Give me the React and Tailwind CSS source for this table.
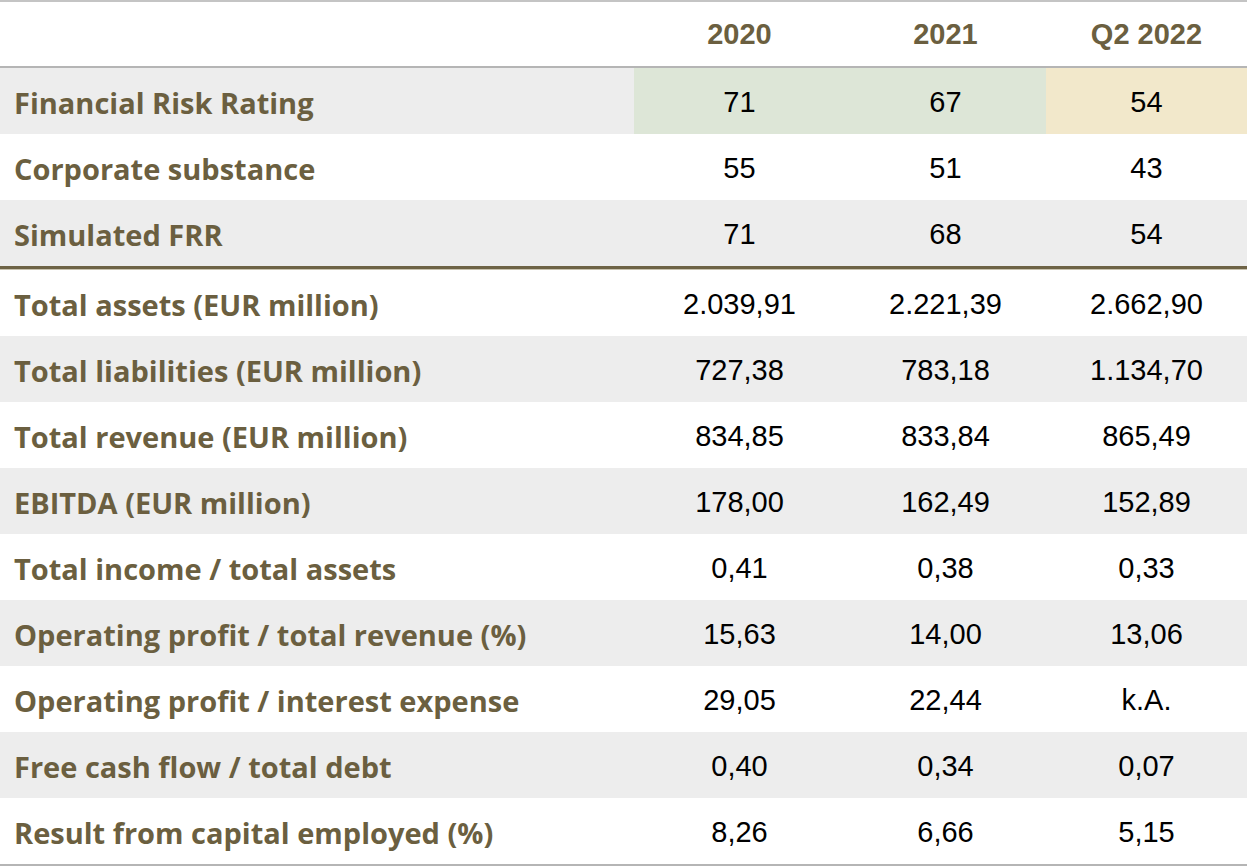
import React from "react";

const rows = [
  { label: "Financial Risk Rating", v: ["71", "67", "54"], gray: true, colors: ["bg-[#dde6d7]", "bg-[#dde6d7]", "bg-[#f2e8cb]"] },
  { label: "Corporate substance", v: ["55", "51", "43"] },
  { label: "Simulated FRR", v: ["71", "68", "54"], gray: true },
];
const rows2 = [
  { label: "Total assets (EUR million)", v: ["2.039,91", "2.221,39", "2.662,90"] },
  { label: "Total liabilities (EUR million)", v: ["727,38", "783,18", "1.134,70"], gray: true },
  { label: "Total revenue (EUR million)", v: ["834,85", "833,84", "865,49"] },
  { label: "EBITDA (EUR million)", v: ["178,00", "162,49", "152,89"], gray: true },
  { label: "Total income / total assets", v: ["0,41", "0,38", "0,33"] },
  { label: "Operating profit / total revenue (%)", v: ["15,63", "14,00", "13,06"], gray: true },
  { label: "Operating profit / interest expense", v: ["29,05", "22,44", "k.A."] },
  { label: "Free cash flow / total debt", v: ["0,40", "0,34", "0,07"], gray: true },
  { label: "Result from capital employed (%)", v: ["8,26", "6,66", "5,15"] },
];

function Row({ r }) {
  return (
    <div className={`grid grid-cols-[634px_211px_201px_201px] h-[66px] ${r.gray ? "bg-[#ededed]" : "bg-white"}`}>
      <div className="flex items-center pl-[14px] pt-[3px] text-[29px] font-bold text-[#6b5f40] [font-family:'Open_Sans',sans-serif]">
        {r.label}
      </div>
      {r.v.map((x, i) => (
        <div
          key={i}
          className={`flex items-center justify-center pt-[3px] text-[29px] text-black [font-family:'Liberation_Sans',Arial,sans-serif] ${r.colors ? r.colors[i] : ""}`}
        >
          {x}
        </div>
      ))}
    </div>
  );
}

export default function App() {
  return (
    <div className="w-[1250px] h-[867px] bg-white">
      <div className="w-[1247px]">
        <div className="border-t-2 border-[#c4c4c4] grid grid-cols-[634px_211px_201px_201px] h-[68px] border-b-2 border-b-[#b5b5b5]">
          <div />
          {["2020", "2021", "Q2 2022"].map((h) => (
            <div key={h} className="flex items-center justify-center pt-[2px] text-[29px] font-bold text-[#6b5f40] [font-family:'Liberation_Sans',Arial,sans-serif]">
              {h}
            </div>
          ))}
        </div>
        {rows.map((r) => (
          <Row key={r.label} r={r} />
        ))}
        <div className="h-[4px] bg-[#6e6346] border-b border-[#c9c3b0]" />
        {rows2.map((r) => (
          <Row key={r.label} r={r} />
        ))}
        <div className="h-[2px] bg-[#b5b5b5]" />
      </div>
    </div>
  );
}
